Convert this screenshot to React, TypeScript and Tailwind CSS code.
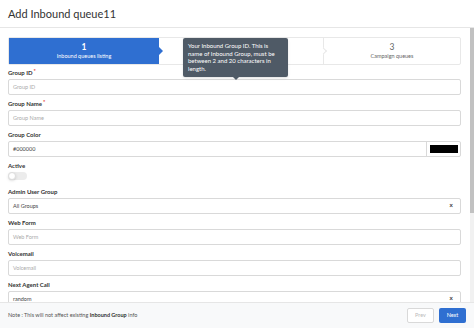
import React from "react"

const fields = [
    { label: "Group ID", required: true, placeholder: "Group ID" },
    { label: "Group Name", required: true, placeholder: "Group Name" },
]

function Label({ text, required }: { text: string; required?: boolean }) {
    return (
        <div className="h-[8px] mb-[2px] flex items-center text-[6px] font-bold text-[#333] leading-none">
            {text}
            {required && <span className="text-[#e53935] text-[5.5px] -mt-[3px] ml-[1px]">*</span>}
        </div>
    )
}

function Input({ placeholder, value, clear }: { placeholder?: string; value?: string; clear?: boolean }) {
    return (
        <div className="h-[16px] border border-[#d9d9d9] rounded-[2px] flex items-center px-[4px] text-[5.5px] bg-white">
            {value ? (
                <span className="text-[#444] flex-1">{value}</span>
            ) : (
                <span className="text-[#aaa] flex-1">{placeholder}</span>
            )}
            {clear && <span className="text-[#333] text-[6.5px] font-bold mr-[3px]">×</span>}
        </div>
    )
}

export default function App() {
    return (
        <div className="w-[474px] h-[328px] overflow-hidden bg-white flex flex-col" style={{ fontFamily: "Lato, 'Open Sans', sans-serif" }}>
            {/* Header */}
            <div className="h-[28px] border-b border-[#e6e6e6] flex items-center px-[8px] shrink-0">
                <h1 className="text-[11px] text-[#333] leading-none">Add Inbound queue11</h1>
            </div>

            <div className="flex-1 flex min-h-0 relative">
                {/* Content */}
                <div className="flex-1 flex flex-col min-w-0">
                    <div className="flex-1 overflow-hidden pl-[8px] pr-[9px] pt-[9px]">
                        {/* Stepper */}
                        <div className="relative flex h-[28px] border border-[#e8e8e8] rounded-[2px]">
                            <div className="relative w-[150px] bg-[#2f6fd1] text-white flex flex-col items-center justify-center">
                                <div className="text-[8.5px] leading-none font-bold">1</div>
                                <div className="text-[5.5px] leading-none mt-[3px]">Inbound queues listing</div>
                                <div className="absolute right-[-4px] top-1/2 -translate-y-1/2 w-0 h-0 border-y-[4px] border-y-transparent border-l-[4px] border-l-[#2f6fd1]" />
                            </div>
                            <div className="flex-1 border-r border-[#e8e8e8] relative">
                                <div className="absolute right-[-3px] top-1/2 -translate-y-1/2 w-[5px] h-[5px] rotate-45 border-t border-r border-[#e8e8e8] bg-white" />
                            </div>
                            <div className="w-[136px] flex flex-col items-center justify-center text-[#666]">
                                <div className="text-[8.5px] leading-none">3</div>
                                <div className="text-[5.5px] leading-none mt-[3px]">Campaign queues</div>
                            </div>

                            {/* Tooltip */}
                            <div className="absolute left-[174px] top-[0px] w-[105px] h-[39px] bg-[#4f5a66] rounded-[2px] text-white text-[6px] leading-[7.5px] px-[5px] py-[4px] shadow">
                                Your Inbound Group ID. This is name of Inbound Group, must be between 2 and 20 characters in length.
                                <div className="absolute left-1/2 bottom-[-3px] -translate-x-1/2 w-0 h-0 border-x-[3px] border-x-transparent border-t-[3px] border-t-[#4f5a66]" />
                            </div>
                        </div>

                        <div className="mt-[4px]">
                            {fields.map((f) => (
                                <div key={f.label} className="mb-[5px]">
                                    <Label text={f.label} required={f.required} />
                                    <Input placeholder={f.placeholder} />
                                </div>
                            ))}

                            <div className="mb-[5px]">
                                <Label text="Group Color" />
                                <div className="h-[16px] border border-[#d9d9d9] rounded-[2px] flex items-center text-[5.5px]">
                                    <span className="flex-1 px-[4px] text-[#444]">#000000</span>
                                    <div className="w-[34px] h-full border-l border-[#d9d9d9] flex items-center justify-center">
                                        <div className="w-[28px] h-[8px] bg-black" />
                                    </div>
                                </div>
                            </div>

                            <div className="mb-[8px]">
                                <Label text="Active" />
                                <div className="w-[19px] h-[8px] rounded-full bg-[#ececec] relative">
                                    <div className="absolute left-0 top-0 w-[8px] h-[8px] rounded-full bg-white border border-[#ddd] shadow-sm" />
                                </div>
                            </div>

                            <div className="mb-[5px]">
                                <Label text="Admin User Group" />
                                <Input value="All Groups" clear />
                            </div>
                            <div className="mb-[5px]">
                                <Label text="Web Form" />
                                <Input placeholder="Web Form" />
                            </div>
                            <div className="mb-[5px]">
                                <Label text="Voicemail" />
                                <Input placeholder="Voicemail" />
                            </div>
                            <div className="mb-[5px]">
                                <Label text="Next Agent Call" />
                                <Input value="random" clear />
                            </div>
                        </div>
                    </div>
                </div>

                {/* Scrollbar */}
                <div className="w-[4px] bg-[#f1f1f1] shrink-0 flex flex-col">
                    <div className="h-[185px] bg-[#c1c1c1]" />
                </div>

                {/* Footer */}
                <div className="absolute left-0 right-0 bottom-0 h-[26px] bg-[#f8f9fa] border-t border-[#e6e6e6] flex items-center pl-[8px] pr-[8px]">
                    <div className="flex-1 text-[5.5px] text-[#555]">
                        Note : This will not affect existing <span className="font-bold text-[#333]">Inbound Group</span> info
                    </div>
                    <button className="w-[27px] h-[15px] border border-[#d9d9d9] rounded-[2px] bg-white text-[5.5px] text-[#bbb] mr-[5px]">Prev</button>
                    <button className="w-[27px] h-[15px] rounded-[2px] bg-[#2f6fd1] text-[5.5px] text-white">Next</button>
                </div>
            </div>
        </div>
    )
}
